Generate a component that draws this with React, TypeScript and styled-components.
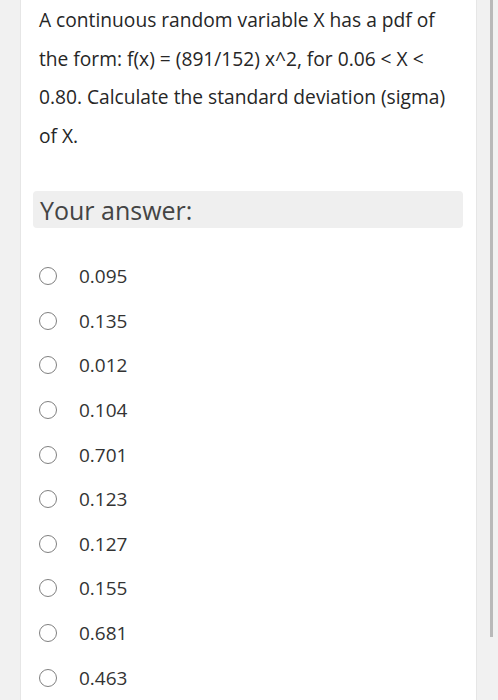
import React from "react";
import styled, { createGlobalStyle } from "styled-components";

const GlobalStyle = createGlobalStyle`
  html, body {
    margin: 0;
    padding: 0;
    background: #f1f1f1;
    font-family: "Open Sans", "Liberation Sans", sans-serif;
    overflow: hidden;
  }
`;

const Page = styled.div`
  display: flex;
  width: 498px;
  height: 700px;
  background: #f1f1f1;
`;

const Card = styled.div`
  width: 457px;
  margin-left: 20px;
  background: #fff;
  border-left: 1px solid #e6e6e6;
  border-right: 1px solid #e6e6e6;
  box-sizing: border-box;
  padding: 0 13px 0 12px;
`;

const Question = styled.p`
  margin: 0;
  width: 420px;
  padding: 1px 0 0 6px;
  font-size: 19.2px;
  line-height: 38.5px;
  color: #262626;
`;

const AnswerBox = styled.div`
  margin-top: 36px;
  height: 37px;
  width: 430px;
  background: #efefef;
  border-radius: 4px;
  display: flex;
  align-items: center;
  padding-left: 7px;
  box-sizing: border-box;
  font-size: 25px;
  color: #444;
`;

const Options = styled.ul`
  list-style: none;
  margin: 26px 0 0 0;
  padding: 0 0 0 6px;
  display: flex;
  flex-direction: column;
`;

const Option = styled.li`
  display: flex;
  align-items: center;
  height: 44.6px;
`;

const Radio = styled.span`
  width: 16px;
  height: 16px;
  border: 1.6px solid #808080;
  border-radius: 50%;
  flex: none;
`;

const Label = styled.span`
  margin-left: 22px;
  font-size: 19px;
  color: #333;
`;

const Gutter = styled.div`
  flex: 1;
  position: relative;
`;

const Thumb = styled.div`
  position: absolute;
  left: 13px;
  top: 0;
  width: 3px;
  height: 637px;
  background: #b9b9b9;
`;

const answers = ["0.095", "0.135", "0.012", "0.104", "0.701", "0.123", "0.127", "0.155", "0.681", "0.463"];

export default function App() {
  return (
    <>
      <GlobalStyle />
      <Page>
        <Card>
          <Question>
            A continuous random variable X has a pdf of the form: f(x) = (891/152) x^2, for 0.06 &lt; X &lt; 0.80.
            Calculate the standard deviation (sigma) of X.
          </Question>
          <AnswerBox>Your answer:</AnswerBox>
          <Options>
            {answers.map((a) => (
              <Option key={a}>
                <Radio />
                <Label>{a}</Label>
              </Option>
            ))}
          </Options>
        </Card>
        <Gutter>
          <Thumb />
        </Gutter>
      </Page>
    </>
  );
}
